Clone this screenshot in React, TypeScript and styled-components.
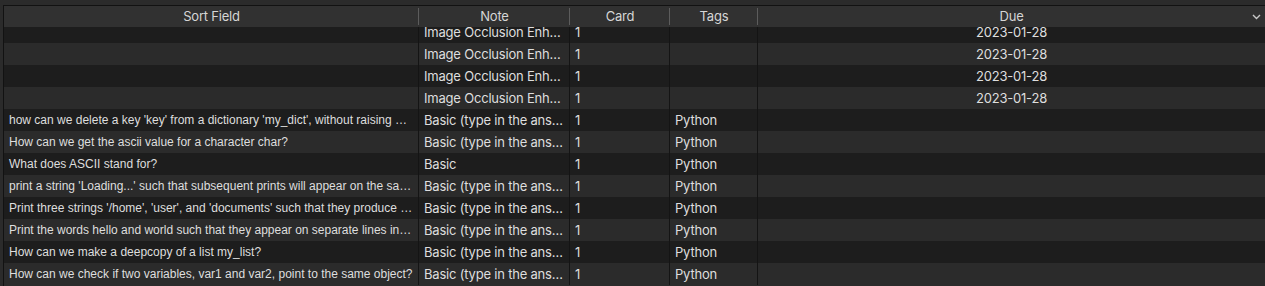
import React, { FC } from 'react';
import styled, { createGlobalStyle } from 'styled-components';

const COLORS = {
    frame: '#2b2b2b',
    edge: '#121212',
    header: '#313131',
    headerSep: '#5c5c5c',
    rowDark: '#1d1d1d',
    rowLight: '#2b2b2b',
    cellSep: '#141414',
    text: '#dedede',
};

const GRID = '415px 151px 100px 88px 1fr';

interface ICard {
    sortField: string;
    note: string;
    card: string;
    tags: string;
    due: string;
}

const CARDS: ICard[] = [
    { sortField: '', note: 'Image Occlusion Enhanced', card: '1', tags: '', due: '2023-01-28' },
    { sortField: '', note: 'Image Occlusion Enhanced', card: '1', tags: '', due: '2023-01-28' },
    { sortField: '', note: 'Image Occlusion Enhanced', card: '1', tags: '', due: '2023-01-28' },
    { sortField: '', note: 'Image Occlusion Enhanced', card: '1', tags: '', due: '2023-01-28' },
    {
        sortField: "how can we delete a key 'key' from a dictionary 'my_dict', without raising an error if it is missing?",
        note: 'Basic (type in the answer)',
        card: '1',
        tags: 'Python',
        due: '',
    },
    { sortField: 'How can we get the ascii value for a character char?', note: 'Basic (type in the answer)', card: '1', tags: 'Python', due: '' },
    { sortField: 'What does ASCII stand for?', note: 'Basic', card: '1', tags: 'Python', due: '' },
    {
        sortField: "print a string 'Loading...' such that subsequent prints will appear on the same line",
        note: 'Basic (type in the answer)',
        card: '1',
        tags: 'Python',
        due: '',
    },
    {
        sortField: "Print three strings '/home', 'user', and 'documents' such that they produce a path",
        note: 'Basic (type in the answer)',
        card: '1',
        tags: 'Python',
        due: '',
    },
    {
        sortField: 'Print the words hello and world such that they appear on separate lines in one call',
        note: 'Basic (type in the answer)',
        card: '1',
        tags: 'Python',
        due: '',
    },
    { sortField: 'How can we make a deepcopy of a list my_list?', note: 'Basic (type in the answer)', card: '1', tags: 'Python', due: '' },
    {
        sortField: 'How can we check if two variables, var1 and var2, point to the same object?',
        note: 'Basic (type in the answer)',
        card: '1',
        tags: 'Python',
        due: '',
    },
];

const HEADERS = ['Sort Field', 'Note', 'Card', 'Tags', 'Due'];

const App: FC = () => {
    return (
        <>
            <GlobalStyle />
            <Frame>
                <Table>
                    <HeaderRow>
                        {HEADERS.map((h, i) => (
                            <HeaderCell key={h} last={i === HEADERS.length - 1}>
                                {h}
                                {i === HEADERS.length - 1 && (
                                    <SortArrow width="9" height="6" viewBox="0 0 9 6">
                                        <polyline points="1,1 4.5,4.5 8,1" />
                                    </SortArrow>
                                )}
                            </HeaderCell>
                        ))}
                    </HeaderRow>
                    <Body>
                        <Rows>
                            {CARDS.map((c, i) => (
                                <Row key={i} striped={i % 2 === 1}>
                                    <Cell sans>{c.sortField}</Cell>
                                    <Cell>{c.note}</Cell>
                                    <Cell>{c.card}</Cell>
                                    <Cell>{c.tags}</Cell>
                                    <Cell centered last>
                                        {c.due}
                                    </Cell>
                                </Row>
                            ))}
                        </Rows>
                    </Body>
                </Table>
            </Frame>
        </>
    );
};

export default App;

const GlobalStyle = createGlobalStyle`
    html, body {
        margin: 0;
        padding: 0;
        background: ${COLORS.frame};
        overflow: hidden;
    }
`;

const Frame = styled.div`
    width: 1265px;
    height: 286px;
    box-sizing: border-box;
    padding: 5px 0 0 3px;
    background: ${COLORS.frame};
    overflow: hidden;
`;

const Table = styled.div`
    height: 100%;
    border-left: 1px solid ${COLORS.edge};
    border-top: 1px solid ${COLORS.edge};
    display: flex;
    flex-direction: column;
    font-family: Inter, 'Liberation Sans', sans-serif;
    color: ${COLORS.text};
`;

const HeaderRow = styled.div`
    display: grid;
    grid-template-columns: ${GRID};
    height: 21px;
    flex-shrink: 0;
    background: ${COLORS.header};
    position: relative;
    z-index: 1;
`;

const HeaderCell = styled.div<{ last?: boolean }>`
    position: relative;
    display: flex;
    align-items: center;
    justify-content: center;
    padding-bottom: 1px;
    font-size: 13px;
    letter-spacing: -0.2px;
    color: #d6d6d6;
    &::after {
        content: '';
        display: ${(p) => (p.last ? 'none' : 'block')};
        position: absolute;
        right: 0;
        top: 2px;
        bottom: 2px;
        width: 1px;
        background: ${COLORS.headerSep};
    }
`;

const SortArrow = styled.svg`
    position: absolute;
    right: 4px;
    top: 8px;
    fill: none;
    stroke: #c8c8c8;
    stroke-width: 1.4;
`;

const Body = styled.div`
    flex: 1;
    overflow: hidden;
`;

const Rows = styled.div`
    margin-top: -6px;
`;

const Row = styled.div<{ striped?: boolean }>`
    display: grid;
    grid-template-columns: ${GRID};
    height: 22px;
    background: ${(p) => (p.striped ? COLORS.rowLight : COLORS.rowDark)};
`;

const Cell = styled.div<{ sans?: boolean; centered?: boolean; last?: boolean }>`
    display: block;
    padding: 0 5px;
    min-width: 0;
    line-height: 22px;
    text-align: ${(p) => (p.centered ? 'center' : 'left')};
    border-right: ${(p) => (p.last ? 'none' : `1px solid ${COLORS.cellSep}`)};
    font-family: ${(p) => (p.sans ? "'Liberation Sans', Arial, sans-serif" : "Inter, 'Liberation Sans', sans-serif")};
    font-size: ${(p) => (p.sans ? '12px' : '13px')};
    letter-spacing: ${(p) => (p.sans ? '0' : '-0.2px')};
    white-space: nowrap;
    overflow: hidden;
    text-overflow: ellipsis;
`;
